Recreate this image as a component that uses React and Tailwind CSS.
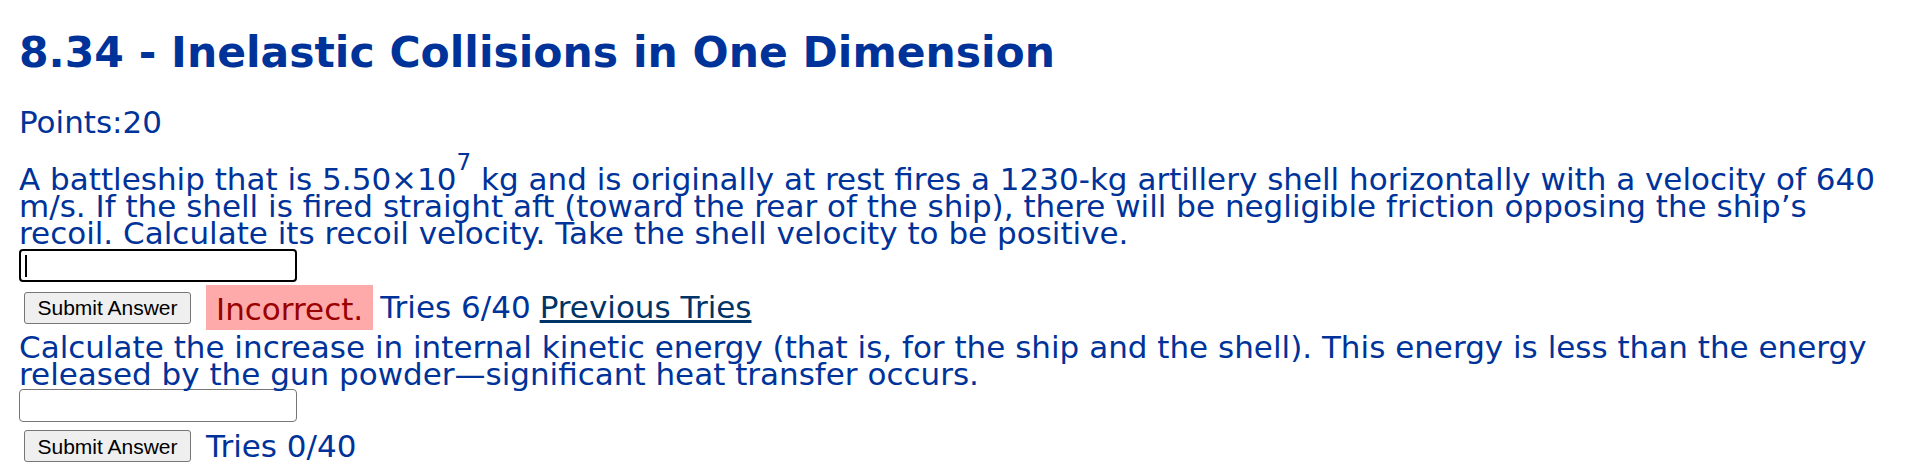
import React from "react"

const bodyFont = {
  fontFamily: '"DejaVu Sans", Verdana, sans-serif',
}

function SubmitButton() {
  return (
    <button
      className="ml-[5px] mr-[15px] h-[32px] w-[167px] shrink-0 rounded-[3px] border border-[#767676] bg-[#efefef] text-[21px] leading-none text-black"
      style={{ fontFamily: '"Liberation Sans", Arial, sans-serif' }}
    >
      Submit Answer
    </button>
  )
}

export default function App() {
  return (
    <div className="min-h-screen bg-white px-[19px] text-[#003399]" style={bodyFont}>

      {/* TITLE */}
      <h1 className="pt-[31px] text-[42.5px] font-bold leading-[44px]">
        8.34 - Inelastic Collisions in One Dimension
      </h1>

      <p className="mt-[34px] text-[31px] leading-[27px]">Points:20</p>

      {/* PART 1 */}
      <p className="mt-[30px] text-[31px] leading-[27px]">
        A battleship that is 5.50×10<sup className="text-[23px] leading-[0] align-[9px]">7</sup> kg and is originally at rest fires a 1230-kg artillery shell horizontally with a velocity of 640
        <br />
        m/s. If the shell is fired straight aft (toward the rear of the ship), there will be negligible friction opposing the ship’s
        <br />
        recoil. Calculate its recoil velocity. Take the shell velocity to be positive.
      </p>

      <div className="mt-[2px] flex h-[33px] w-[278px] items-center rounded-[4px] border-2 border-black bg-white px-[4px]">
        <span className="h-[22px] w-[2px] bg-black" />
        <input className="min-w-0 flex-1 outline-none" />
      </div>

      <div className="mt-[3px] flex h-[45px] items-center">
        <SubmitButton />
        <span className="bg-[#ffaaaa] px-[10px] pb-[7px] pt-[11px] text-[31px] leading-[27px] text-[#990000]">
          Incorrect.
        </span>
        <span className="ml-[7px] text-[31px] leading-[27px]">Tries 6/40</span>
        <a href="#" className="ml-[9px] text-[31px] leading-[27px] text-[#003366] underline">
          Previous Tries
        </a>
      </div>

      {/* PART 2 */}
      <p className="mt-[4px] text-[31px] leading-[27px]">
        Calculate the increase in internal kinetic energy (that is, for the ship and the shell). This energy is less than the energy
        <br />
        released by the gun powder—significant heat transfer occurs.
      </p>

      <input className="mt-[1px] block h-[33px] w-[278px] rounded-[4px] border border-[#767676] bg-white outline-none" />

      <div className="mt-[7px] flex h-[34px] items-center">
        <SubmitButton />
        <span className="text-[31px] leading-[27px]">Tries 0/40</span>
      </div>

    </div>
  )
}
